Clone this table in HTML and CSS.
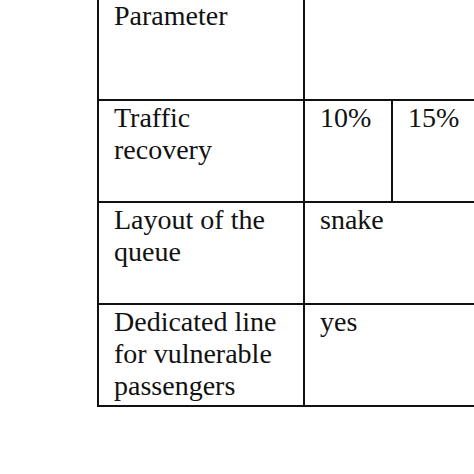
FILE: index.html
```html
<!DOCTYPE html>
<html>
<head>
<meta charset="utf-8">
<link rel="stylesheet" href="styles.css">
</head>
<body>
<table class="grid">
  <colgroup>
    <col class="c1"><col class="c2"><col class="c3">
  </colgroup>
  <tr class="row">
    <td class="cell">Parameter</td>
    <td class="cell" colspan="2"></td>
  </tr>
  <tr class="row">
    <td class="cell">Traffic recovery</td>
    <td class="cell">10%</td>
    <td class="cell">15%</td>
  </tr>
  <tr class="row">
    <td class="cell">Layout of the queue</td>
    <td class="cell" colspan="2">snake</td>
  </tr>
  <tr class="row">
    <td class="cell">Dedicated line for vulnerable passengers</td>
    <td class="cell" colspan="2">yes</td>
  </tr>
</table>
</body>
</html>
```
FILE: styles.css
```css
html, body {
  margin: 0;
  padding: 0;
  background: #fff;
  overflow: hidden;
  width: 474px;
  height: 474px;
}
.grid {
  border-collapse: collapse;
  table-layout: fixed;
  width: 420px;
  margin-left: 97px;
  margin-top: -3px;
  font-family: "Liberation Serif", "Times New Roman", serif;
  font-size: 28px;
  line-height: 32px;
  color: #111;
}
.c1 { width: 206px; }
.c2 { width: 88px; }
.c3 { width: 126px; }
.row { height: 102px; }
.cell {
  border: 2px solid #111;
  vertical-align: top;
  padding: 1px 14px 0 15px;
  box-sizing: border-box;
}
```
